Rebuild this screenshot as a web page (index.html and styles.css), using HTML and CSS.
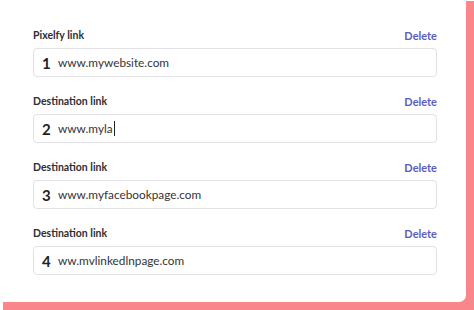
FILE: index.html
```html
<!DOCTYPE html>
<html lang="en">
<head>
    <meta charset="UTF-8">
    <title>Links</title>
    <link rel="stylesheet" href="styles.css">
</head>
<body>
    <div class="backdrop">
        <div class="card">
            <div class="link-group">
                <div class="link-head">
                    <span class="link-label">Pixelfy link</span>
                    <a class="link-delete">Delete</a>
                </div>
                <div class="link-input">
                    <span class="link-num">1</span>
                    <span class="link-url">www.mywebsite.com</span>
                </div>
            </div>
            <div class="link-group">
                <div class="link-head">
                    <span class="link-label">Destination link</span>
                    <a class="link-delete">Delete</a>
                </div>
                <div class="link-input">
                    <span class="link-num">2</span>
                    <span class="link-url">www.myla<span class="caret"></span></span>
                </div>
            </div>
            <div class="link-group">
                <div class="link-head">
                    <span class="link-label">Destination link</span>
                    <a class="link-delete">Delete</a>
                </div>
                <div class="link-input">
                    <span class="link-num">3</span>
                    <span class="link-url">www.myfacebookpage.com</span>
                </div>
            </div>
            <div class="link-group">
                <div class="link-head">
                    <span class="link-label">Destination link</span>
                    <a class="link-delete">Delete</a>
                </div>
                <div class="link-input">
                    <span class="link-num">4</span>
                    <span class="link-url">ww.mvlinkedlnpage.com</span>
                </div>
            </div>
        </div>
    </div>
</body>
</html>
```

FILE: styles.css
```css
* {
    padding: 0;
    margin: 0;
    box-sizing: border-box;
}

body {
    background: #fff;
    font-family: Lato, "Liberation Sans", sans-serif;
    color: #2e2e33;
    overflow: hidden;
}

.backdrop {
    position: relative;
    width: 474px;
    height: 310px;
    overflow: hidden;
}

.backdrop::before {
    content: "";
    position: absolute;
    left: 3px;
    top: 1px;
    right: -20px;
    bottom: -20px;
    background: #f9868b;
    border-radius: 10px;
}

.card {
    position: relative;
    width: 466px;
    height: 302px;
    background: #fff;
    border-radius: 0 0 7px 0;
    padding: 28px 29px 0 33px;
    display: flex;
    flex-direction: column;
    gap: 17px;
}

.link-head {
    display: flex;
    justify-content: space-between;
    align-items: center;
    height: 14px;
    font-size: 10.5px;
    font-weight: 700;
}

.link-label {
    color: #2e2e33;
}

.link-delete {
    color: #5b5cc0;
    font-size: 11px;
    cursor: pointer;
}

.link-input {
    margin-top: 6px;
    height: 29px;
    border: 1px solid #e1e1e6;
    border-radius: 4px;
    display: flex;
    align-items: center;
    padding-left: 8px;
}

.link-num {
    font-size: 15px;
    font-weight: 700;
    color: #1f1f24;
    width: 16px;
}

.link-url {
    font-size: 11.8px;
    color: #333338;
    display: flex;
    align-items: center;
}

.caret {
    display: inline-block;
    width: 1px;
    height: 15px;
    background: #222;
    margin-left: 1px;
}
```
